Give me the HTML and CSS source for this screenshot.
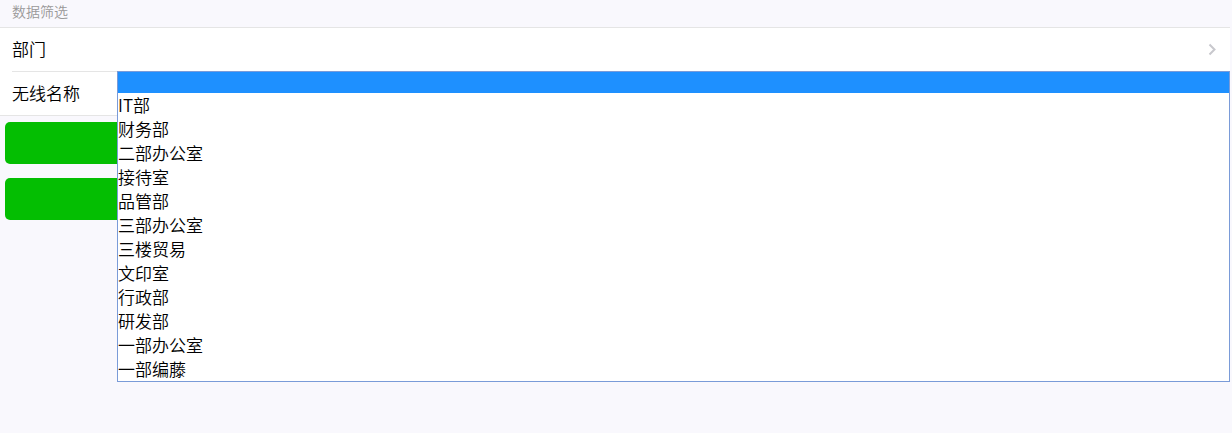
FILE: index.html
```html
<!DOCTYPE html>
<html lang="zh">
<head>
<meta charset="utf-8">
<link rel="stylesheet" href="styles.css">
</head>
<body>
<div class="page">
  <div class="section-title">数据筛选</div>
  <div class="cells">
    <div class="cell cell-access">
      <span class="cell-label">部门</span>
      <svg class="chevron" width="8" height="13" viewBox="0 0 8 13"><path d="M1.5 1.5 L6.5 6.5 L1.5 11.5" fill="none" stroke="#c8c8cd" stroke-width="2"/></svg>
    </div>
    <div class="cell">
      <span class="cell-label">无线名称</span>
    </div>
  </div>
  <div class="btn-area">
    <div class="btn"></div>
    <div class="btn"></div>
  </div>
  <ul class="dropdown">
    <li class="opt opt-empty selected"></li>
    <li class="opt">IT部</li>
    <li class="opt">财务部</li>
    <li class="opt">二部办公室</li>
    <li class="opt">接待室</li>
    <li class="opt">品管部</li>
    <li class="opt">三部办公室</li>
    <li class="opt">三楼贸易</li>
    <li class="opt">文印室</li>
    <li class="opt">行政部</li>
    <li class="opt">研发部</li>
    <li class="opt">一部办公室</li>
    <li class="opt">一部编藤</li>
  </ul>
</div>
</body>
</html>
```

FILE: styles.css
```css
html, body {
  margin: 0;
  padding: 0;
  background: #f9f8fd;
  font-family: "Noto Sans CJK SC", "Noto Sans", sans-serif;
  font-weight: 350;
}
.page {
  position: relative;
  margin-right: 2px;
  height: 433px;
}
.section-title {
  height: 27px;
  line-height: 23px;
  padding-left: 12px;
  font-size: 14px;
  color: #999;
  border-bottom: 1px solid #e5e5e5;
}
.cells {
  background: #fff;
  border-bottom: 1px solid #e5e5e5;
}
.cell {
  height: 43px;
  display: flex;
  align-items: center;
  justify-content: space-between;
  padding: 0 14px 0 12px;
  font-size: 17px;
  color: #000;
}
.cell + .cell {
  border-top: 1px solid #e5e5e5;
  margin-left: 12px;
  padding-left: 0;
}
.cell-label {
  line-height: 24px;
  margin-top: -1px;
}
.chevron {
  display: block;
}
.btn-area {
  display: flex;
  flex-direction: column;
  gap: 14px;
  padding: 6px 3px 0 5px;
}
.btn {
  height: 42px;
  background: #04be02;
  border-radius: 5px;
}
.dropdown {
  position: absolute;
  left: 117px;
  top: 71px;
  width: 1111px;
  margin: 0;
  padding: 0;
  list-style: none;
  background: #fff;
  border: 1px solid #7a9bd8;
}
.opt {
  height: 24px;
  line-height: 24px;
  font-size: 17px;
  color: #000;
  padding-left: 0;
  white-space: nowrap;
}
.opt-empty {
  height: 21px;
}
.selected {
  background: #1e90ff;
}
```
